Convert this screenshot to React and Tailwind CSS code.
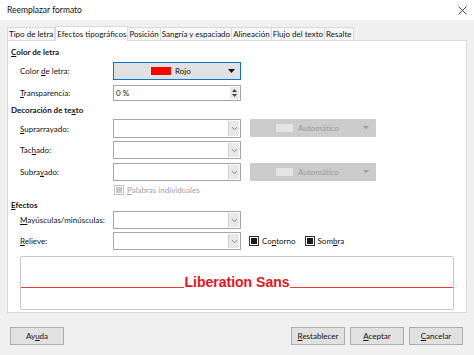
import React from "react";

const U = ({ children }) => <span className="underline underline-offset-1">{children}</span>;

function Combo({ w = "w-[128px]" }) {
  return (
    <div className={`${w} h-full bg-white border border-[#a8a8a8] flex`}>
      <div className="flex-1" />
      <div className="w-[11px] my-[1px] mr-[1px] bg-[#e8e8e8] border-l border-[#d0d0d0] flex items-center justify-center">
        <svg width="7" height="5" viewBox="0 0 7 5"><path d="M1 1.2 L3.5 3.6 L6 1.2" fill="none" stroke="#7a7a7a" strokeWidth="0.9" /></svg>
      </div>
    </div>
  );
}

function AutoList() {
  return (
    <div className="w-[126px] h-[18px] bg-[#cccccc] flex items-center">
      <div className="w-[17px] h-[8px] bg-[#e4e4e4] ml-[26px]" />
      <span className="ml-[5px] text-[#9a9a9a]">Automático</span>
      <div className="flex-1" />
      <svg width="6" height="4" viewBox="0 0 6 4" className="mr-[7px]"><path d="M0 0 L6 0 L3 3.5Z" fill="#a0a0a0" /></svg>
    </div>
  );
}

function Check({ disabled, children }) {
  return (
    <div className={`flex items-center gap-[3px] ${disabled ? "text-[#a0a0a0]" : ""}`}>
      <div className={`w-[10px] h-[10px] border ${disabled ? "border-[#c0c0c0]" : "border-[#333]"} bg-white flex items-center justify-center`}>
        <div className={`w-[6px] h-[6px] ${disabled ? "bg-[#c8c8c8]" : "bg-[#1a1a1a]"}`} />
      </div>
      <span>{children}</span>
    </div>
  );
}

function Row({ label, h, mt, children }) {
  return (
    <div className={`flex items-stretch ${h} ${mt}`}>
      <div className="w-[102px] pl-[9px] flex items-center whitespace-nowrap">{label}</div>
      {children}
    </div>
  );
}

function Btn({ children, w = "w-[54px]" }) {
  return (
    <div className={`${w} h-[18px] bg-[#e1e1e1] border border-[#adadad] flex items-center justify-center`}>{children}</div>
  );
}

export default function App() {
  const tabs = ["Tipo de letra", "Efectos tipográficos", "Posición", "Sangría y espaciado", "Alineación", "Flujo del texto", "Resalte"];
  return (
    <div className="w-[474px] h-[355px] bg-[#f0f0f0] text-[8px] leading-none text-[#111] overflow-hidden" style={{ fontFamily: 'Lato, "Noto Sans", sans-serif' }}>
      <div className="h-[20px] bg-white flex items-center justify-between pl-[7px] pr-[7px]">
        <span className="text-[8.5px]">Reemplazar formato</span>
        <svg width="9" height="9" viewBox="0 0 9 9"><path d="M0.5 0.5 L8.5 8.5 M8.5 0.5 L0.5 8.5" stroke="#333" strokeWidth="0.9" /></svg>
      </div>
      <div className="pl-[7px] flex items-end h-[20px]">
        {tabs.map((t, i) =>
          i === 1 ? (
            <div key={t} className="h-[15px] px-[1px] bg-white border border-b-0 border-[#d9d9d9] flex items-center -mb-[1px] relative z-10">{t}</div>
          ) : (
            <div key={t} className="h-[13px] px-[1px] bg-[#f7f7f7] border border-b-0 border-[#d9d9d9] -ml-[1px] first:ml-0 flex items-center">{t}</div>
          )
        )}
      </div>
      <div className="mx-[7px] h-[273px] bg-white border border-[#d9d9d9] pl-[3px] pr-[12px]">
        <div className="h-[14px] mt-[4px] font-bold flex items-center"><U>C</U>olor de letra</div>
        <Row label={<span>Color <U>d</U>e letra:</span>} h="h-[18px]" mt="mt-[3px]">
          <div className="w-[128px] bg-[#e1e1e1] border border-[#0078d7] flex items-center">
            <div className="w-[20px] h-[8px] bg-[#ff0000] ml-[37px]" />
            <span className="ml-[4px]">Rojo</span>
            <div className="flex-1" />
            <svg width="7" height="4" viewBox="0 0 7 4" className="mr-[5px]"><path d="M0 0 L7 0 L3.5 4Z" fill="#111" /></svg>
          </div>
        </Row>
        <Row label={<span><U>T</U>ransparencia:</span>} h="h-[16px]" mt="mt-[5px]">
          <div className="w-[128px] bg-white border border-[#a8a8a8] flex">
            <span className="pl-[2px] flex-1 flex items-center">0 %</span>
            <div className="w-[9px] my-[1px] mr-[1px] bg-[#e8e8e8] flex flex-col items-center justify-center gap-[2px]">
              <svg width="5" height="3" viewBox="0 0 5 3"><path d="M0 3 L5 3 L2.5 0Z" fill="#444" /></svg>
              <svg width="5" height="3" viewBox="0 0 5 3"><path d="M0 0 L5 0 L2.5 3Z" fill="#444" /></svg>
            </div>
          </div>
        </Row>
        <div className="h-[14px] mt-[2px] font-bold flex items-center"><span>Decoración de te<U>x</U>to</span></div>
        <Row label={<span><U>S</U>uprarrayado:</span>} h="h-[19px]" mt="mt-[2px]">
          <Combo />
          <div className="ml-[9px]"><AutoList /></div>
        </Row>
        <Row label={<span>Tac<U>h</U>ado:</span>} h="h-[18px]" mt="mt-[3px]">
          <Combo />
        </Row>
        <Row label={<span>Subra<U>y</U>ado:</span>} h="h-[18px]" mt="mt-[4px]">
          <Combo />
          <div className="ml-[9px]"><AutoList /></div>
        </Row>
        <div className="h-[14px] mt-[2px] pl-[103px] flex items-center">
          <Check disabled><U>P</U>alabras individuales</Check>
        </div>
        <div className="h-[13px] mt-[1px] font-bold flex items-center"><span><U>E</U>fectos</span></div>
        <Row label={<span><U>M</U>ayúsculas/minúsculas:</span>} h="h-[18px]" mt="mt-[0px]">
          <Combo />
        </Row>
        <Row label={<span><U>R</U>elieve:</span>} h="h-[18px]" mt="mt-[3px]">
          <Combo />
          <div className="ml-[8px] flex items-center gap-[9px]">
            <Check>Co<U>n</U>torno</Check>
            <Check>Som<U>b</U>ra</Check>
          </div>
        </Row>
        <div className="ml-[9px] mt-[6px] h-[54px] w-[434px] border border-[#c8c8c8] rounded-[2px] flex flex-col">
          <div className="h-[15px]" />
          <div className="flex w-full items-end h-[20px]">
            <div className="flex-1 h-[1px] bg-[#ec3b3b] mb-[4px]" />
            <span className="text-[14px] font-bold text-[#e8141c] leading-[20px]" style={{ fontFamily: '"Liberation Sans", Arial, sans-serif' }}>Liberation Sans</span>
            <div className="flex-1 h-[1px] bg-[#ec3b3b] mb-[4px]" />
          </div>
        </div>
      </div>
      <div className="flex items-center px-[10px] mt-[14px]">
        <Btn>Ay<U>u</U>da</Btn>
        <div className="flex-1" />
        <div className="flex gap-[5px] mr-[1px]">
          <Btn><span><U>R</U>establecer</span></Btn>
          <Btn><span><U>A</U>ceptar</span></Btn>
          <Btn><span><U>C</U>ancelar</span></Btn>
        </div>
      </div>
    </div>
  );
}
